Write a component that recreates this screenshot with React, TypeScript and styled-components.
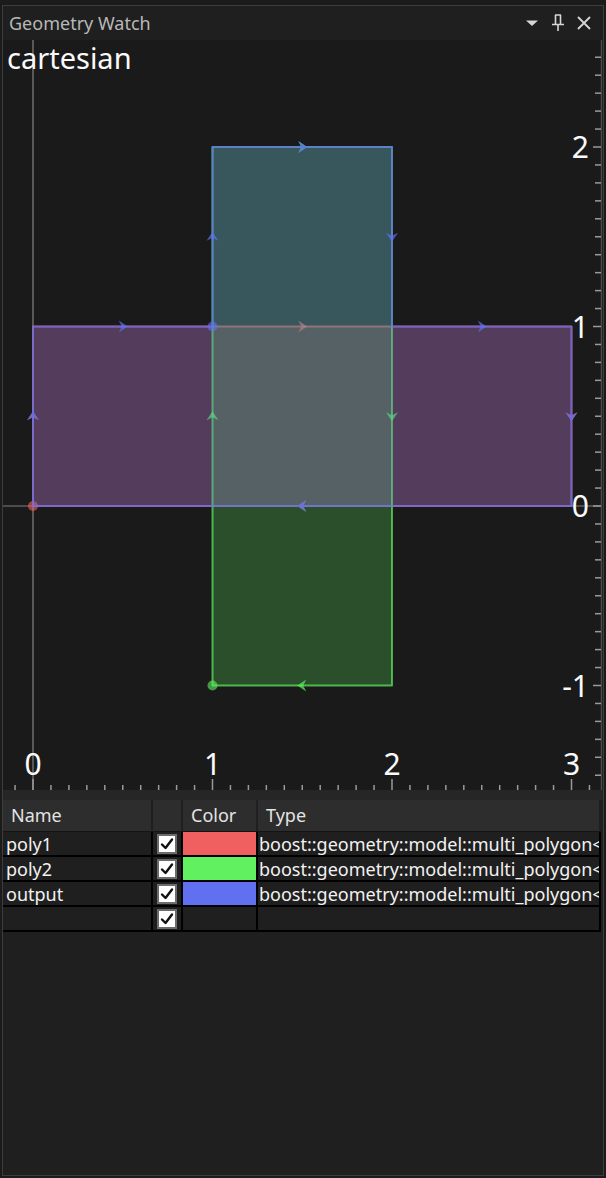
import React from 'react';
import styled, { createGlobalStyle } from 'styled-components';

const GlobalStyle = createGlobalStyle`
  html, body {
    margin: 0;
    padding: 0;
    background: #1b1b1b;
  }
  body {
    font-family: "Noto Sans", "Open Sans", sans-serif;
  }
`;

const Window = styled.div`
  width: 606px;
  height: 1178px;
  box-sizing: border-box;
  padding: 5px 2px 2px 2px;
  background: #1b1b1b;
`;

const Frame = styled.div`
  height: 100%;
  box-sizing: border-box;
  border: 1px solid #3d3d3d;
  background: #1f1f1f;
  display: flex;
  flex-direction: column;
`;

const TitleBar = styled.div`
  height: 34px;
  flex-shrink: 0;
  display: flex;
  align-items: center;
  padding: 0 6px 0 6px;
  background: #1f1f1f;
`;

const Title = styled.span`
  flex: 1;
  color: #b8b8b8;
  font-size: 18px;
  line-height: 1;
  margin-top: -1px;
`;

const IconButton = styled.span`
  width: 26px;
  height: 26px;
  display: flex;
  align-items: center;
  justify-content: center;
  color: #d6d6d6;
`;

const ChartArea = styled.div`
  height: 750px;
  flex-shrink: 0;
  background: #1a1a1a;
  svg {
    display: block;
  }
`;

const Splitter = styled.div`
  height: 10px;
  flex-shrink: 0;
  background: #262626;
`;

const Table = styled.div`
  margin-right: 2px;
  display: flex;
  flex-direction: column;
`;

const COLUMNS = '150px 30px 75px 1fr';

const HeaderRow = styled.div`
  display: grid;
  grid-template-columns: ${COLUMNS};
  height: 32px;
  box-sizing: border-box;
  background: #2d2d2d;
  border-bottom: 1px solid #141414;
`;

const HeaderCell = styled.div<{ $pad: number }>`
  display: flex;
  align-items: center;
  padding-left: ${(p) => p.$pad}px;
  padding-bottom: 2px;
  border-right: 2px solid #1f1f1f;
  color: #e4e4e4;
  font-size: 18px;
`;

const DataRow = styled.div`
  display: grid;
  grid-template-columns: ${COLUMNS};
  height: 25px;
  box-sizing: border-box;
  background: #1f1f1f;
  border-bottom: 2px solid #000;
`;

const Cell = styled.div<{ $pad?: number; $fill?: string }>`
  display: flex;
  align-items: center;
  padding-left: ${(p) => p.$pad ?? 0}px;
  border-right: 2px solid #000;
  background: ${(p) => p.$fill ?? 'transparent'};
  color: #f2f2f2;
  font-size: 18px;
  white-space: nowrap;
  overflow: hidden;
`;

const CheckCell = styled(Cell)`
  justify-content: center;
`;

const CheckBox = styled.span`
  width: 16px;
  height: 16px;
  background: #fff;
  border: 2px solid #6c6c6c;
  display: flex;
  align-items: center;
  justify-content: center;
`;

// --- chart geometry ---
const U = 179.5;
const X0 = 30;
const Y0 = 466;
const W = 600;
const H = 750;
const px = (x: number) => X0 + x * U;
const py = (y: number) => Y0 - y * U;

type Pt = [number, number];

const shapes: { color: string; pts: Pt[] }[] = [
  { color: '#f06060', pts: [[0, 0], [0, 1], [3, 1], [3, 0]] },
  { color: '#60f060', pts: [[1, -1], [1, 2], [2, 2], [2, -1]] },
  { color: '#6070f0', pts: [[1, 1], [1, 2], [2, 2], [2, 1], [3, 1], [3, 0], [0, 0], [0, 1]] },
];

const rows = [
  { name: 'poly1', color: '#f06060' },
  { name: 'poly2', color: '#60f060' },
  { name: 'output', color: '#6070f0' },
];

const TYPE = 'boost::geometry::model::multi_polygon<boost::geometry::model::polygon<';

const Shape: React.FC<{ color: string; pts: Pt[] }> = ({ color, pts }) => {
  const d = pts.map(([x, y], i) => `${i ? 'L' : 'M'}${px(x)},${py(y)}`).join(' ') + ' Z';
  return (
    <g>
      <path d={d} fill={color} fillOpacity={0.25} stroke={color} strokeOpacity={0.7} strokeWidth={2} strokeLinejoin="round" />
      {pts.map(([x, y], i) => {
        const [nx, ny] = pts[(i + 1) % pts.length];
        const mx = px((x + nx) / 2);
        const my = py((y + ny) / 2);
        const a = (Math.atan2(py(ny) - py(y), px(nx) - px(x)) * 180) / Math.PI;
        return (
          <path
            key={i}
            d="M5,0 L-4,-6 L-1,0 L-4,6 Z"
            transform={`translate(${mx},${my}) rotate(${a})`}
            fill={color}
            fillOpacity={0.7}
          />
        );
      })}
      <circle cx={px(pts[0][0])} cy={py(pts[0][1])} r={5} fill={color} fillOpacity={0.6} />
    </g>
  );
};

const Chart: React.FC = () => {
  const yTicks: number[] = [];
  for (let i = -30; i <= 30; i++) {
    const y = Y0 - (i * U) / 10;
    if (y >= 0 && y <= H) yTicks.push(i);
  }
  const xTicks: number[] = [];
  for (let i = -5; i <= 40; i++) {
    const x = X0 + (i * U) / 10;
    if (x >= 0 && x <= 598) xTicks.push(i);
  }
  return (
    <svg width={W} height={H}>
      <line x1={0} y1={Y0} x2={598} y2={Y0} stroke="#4c4c4c" strokeWidth={2} />
      <line x1={X0} y1={0} x2={X0} y2={H} stroke="#6e6e6e" strokeWidth={1.5} />
      {shapes.map((s) => (
        <Shape key={s.color} {...s} />
      ))}
      <line x1={598.5} y1={0} x2={598.5} y2={H} stroke="#4a4a4a" strokeWidth={1.5} />
      {yTicks.map((i) => {
        const y = Y0 - (i * U) / 10;
        return <line key={i} x1={i % 10 === 0 ? 590 : 592} y1={y} x2={598} y2={y} stroke="#9a9a9a" strokeWidth={1.5} />;
      })}
      {xTicks.map((i) => {
        const x = X0 + (i * U) / 10;
        return <line key={i} x1={x} y1={i % 10 === 0 ? 739 : 745} x2={x} y2={H} stroke="#9a9a9a" strokeWidth={1.5} />;
      })}
      <g fill="#fafafa" fontFamily='"Noto Sans", "Open Sans", sans-serif' fontSize={30}>
        {[2, 1, 0, -1].map((v) => (
          <text key={v} x={586} y={py(v) + 11} textAnchor="end">
            {v}
          </text>
        ))}
        {[0, 1, 2, 3].map((v) => (
          <text key={v} x={px(v)} y={735} textAnchor="middle">
            {v}
          </text>
        ))}
        <text x={4} y={29} fontSize={29}>
          cartesian
        </text>
      </g>
    </svg>
  );
};

const Check = () => (
  <svg width={14} height={14} viewBox="0 0 14 14">
    <path d="M2,7.5 L5.5,11 L12,2.5" fill="none" stroke="#111" strokeWidth={2.4} strokeLinecap="round" strokeLinejoin="round" />
  </svg>
);

const App: React.FC = () => {
  return (
    <>
      <GlobalStyle />
      <Window>
        <Frame>
          <TitleBar>
            <Title>Geometry Watch</Title>
            <IconButton>
              <svg width={14} height={8} viewBox="0 0 14 8">
                <path d="M1,1.5 L13,1.5 L7,7 Z" fill="currentColor" />
              </svg>
            </IconButton>
            <IconButton>
              <svg width={14} height={18} viewBox="0 0 14 18">
                <path d="M4,1 L10,1 M4.5,1 L4.5,10 M9.5,1 L9.5,10 M1,10.5 L13,10.5 M7,10.5 L7,17" fill="none" stroke="currentColor" strokeWidth={1.6} />
              </svg>
            </IconButton>
            <IconButton>
              <svg width={16} height={16} viewBox="0 0 16 16">
                <path d="M2,2 L14,14 M14,2 L2,14" fill="none" stroke="currentColor" strokeWidth={1.8} />
              </svg>
            </IconButton>
          </TitleBar>
          <ChartArea>
            <Chart />
          </ChartArea>
          <Splitter />
          <Table>
            <HeaderRow>
              <HeaderCell $pad={8}>Name</HeaderCell>
              <HeaderCell $pad={0} />
              <HeaderCell $pad={8}>Color</HeaderCell>
              <HeaderCell $pad={8}>Type</HeaderCell>
            </HeaderRow>
            {rows.map((r) => (
              <DataRow key={r.name}>
                <Cell $pad={3}>{r.name}</Cell>
                <CheckCell>
                  <CheckBox>
                    <Check />
                  </CheckBox>
                </CheckCell>
                <Cell $fill={r.color} />
                <Cell $pad={1}>{TYPE}</Cell>
              </DataRow>
            ))}
            <DataRow>
              <Cell />
              <CheckCell>
                <CheckBox>
                  <Check />
                </CheckBox>
              </CheckCell>
              <Cell />
              <Cell />
            </DataRow>
          </Table>
        </Frame>
      </Window>
    </>
  );
};

export default App;
